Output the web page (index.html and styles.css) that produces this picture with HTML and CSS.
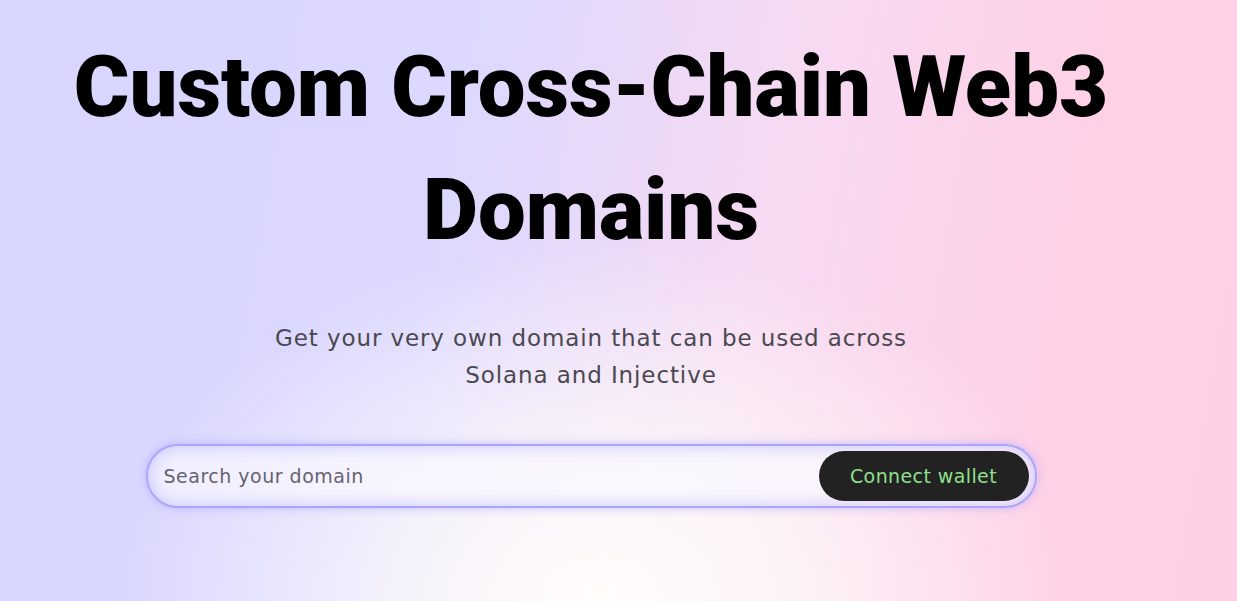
FILE: index.html
```html
<!DOCTYPE html>
<html lang="en">
<head>
    <meta charset="UTF-8">
    <meta name="viewport" content="width=device-width, initial-scale=1.0">
    <title>Web3 Domains</title>
    <link rel="stylesheet" href="styles.css">
</head>
<body>
    <!-- Hero -->
    <main class="hero">
        <h1 class="hero-title">Custom Cross-Chain Web3 Domains</h1>
        <p class="hero-sub">Get your very own domain that can be used across<br>Solana and Injective</p>

        <!-- Barre de recherche -->
        <form class="search-bar" onsubmit="return false">
            <input class="search-input" type="text" placeholder="Search your domain">
            <button class="connect-btn" type="button">Connect wallet</button>
        </form>
    </main>
</body>
</html>
```

FILE: styles.css
```css
* {
    margin: 0;
    padding: 0;
    box-sizing: border-box;
}

body {
    height: 100vh;
    overflow: hidden;
    font-family: "DejaVu Sans", "Open Sans", sans-serif;
    background:
        radial-gradient(ellipse 480px 360px at 600px 600px, #fffdfa 0%, rgba(255, 253, 250, 0.65) 45%, rgba(255, 253, 250, 0) 100%),
        linear-gradient(100deg, #d8d6ff 0%, #dcd8ff 35%, #f6daf2 60%, #ffd0e6 85%, #ffcfe6 100%);
}

/* Bloc central */
.hero {
    width: 1182px;
    display: flex;
    flex-direction: column;
    align-items: center;
    text-align: center;
}

.hero-title {
    width: 1120px;
    margin-top: 26px;
    font-family: Roboto, "Liberation Sans", sans-serif;
    font-weight: 900;
    font-size: 85px;
    line-height: 123px;
    letter-spacing: 0;
    color: #000;
}

.hero-sub {
    margin-top: 48px;
    font-size: 23px;
    font-weight: 400;
    line-height: 37px;
    letter-spacing: 0.9px;
    color: #4a4850;
}

/* Recherche + bouton */
.search-bar {
    margin-top: 50px;
    width: 891px;
    height: 64px;
    display: flex;
    align-items: center;
    padding: 0 6px 0 16px;
    border: 2px solid #a9a6ff;
    border-radius: 32px;
    background: rgba(250, 248, 255, 0.7);
    box-shadow: 0 0 8px rgba(150, 145, 255, 0.5), inset 0 0 16px rgba(170, 165, 255, 0.6);
}

.search-input {
    flex: 1;
    border: none;
    outline: none;
    background: transparent;
    font-family: "DejaVu Sans", "Open Sans", sans-serif;
    font-size: 19px;
    letter-spacing: 0.5px;
    color: #333;
}

.search-input::placeholder {
    color: #666370;
}

.connect-btn {
    width: 210px;
    height: 50px;
    border: none;
    border-radius: 25px;
    background: #222;
    color: #8ee08a;
    font-family: "DejaVu Sans", "Open Sans", sans-serif;
    font-size: 19px;
    letter-spacing: 0.4px;
    cursor: pointer;
}
```
